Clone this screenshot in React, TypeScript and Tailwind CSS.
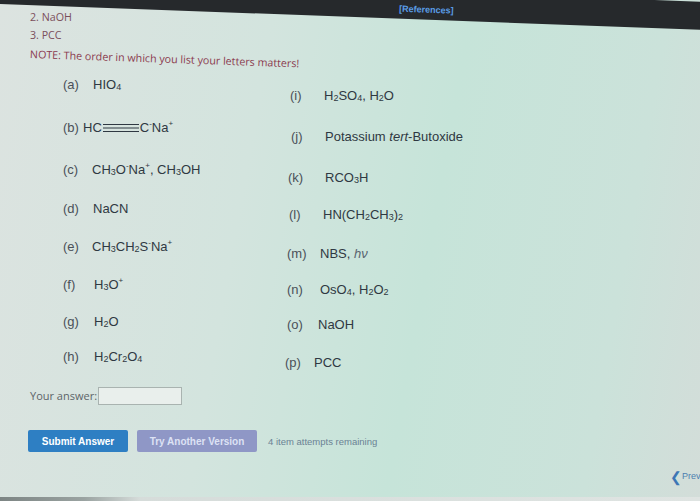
import React from "react";

const sans = { fontFamily: '"Liberation Sans", Arial, sans-serif' };

function TripleBond() {
  return (
    <svg width="36" height="10" viewBox="0 0 36 10" className="mx-[1px]">
      <line x1="0" y1="1.5" x2="36" y2="1.5" stroke="#2f3842" strokeWidth="1.2" />
      <line x1="0" y1="5" x2="36" y2="5" stroke="#2f3842" strokeWidth="1.2" />
      <line x1="0" y1="8.5" x2="36" y2="8.5" stroke="#2f3842" strokeWidth="1.2" />
    </svg>
  );
}

function Row({
  label,
  cls,
  labelCls,
  children,
}: {
  label: string;
  cls: string;
  labelCls: string;
  children: React.ReactNode;
}) {
  return (
    <div className={`flex h-[20px] items-center text-[13px] text-[#2f3842] ${cls}`}>
      <span className={`text-[#4a5058] ${labelCls}`}>{label}</span>
      <span className="flex items-center whitespace-nowrap">{children}</span>
    </div>
  );
}

const S = ({ children }: { children: React.ReactNode }) => (
  <sub className="text-[9px]">{children}</sub>
);
const P = ({ children }: { children: React.ReactNode }) => (
  <sup className="text-[8px]">{children}</sup>
);

export default function App() {
  return (
    <div
      className="relative flex h-[501px] w-[700px] flex-col overflow-hidden bg-[linear-gradient(100deg,#dce3e0_0%,#d3e4de_35%,#c6e4d9_60%,#cbe2da_85%,#d3ddd9_100%)]"
      style={sans}
    >
      {/* top frame bar */}
      <div className="h-0">
        <div className="mt-[-24px] flex h-[28px] w-[740px] origin-top-left rotate-[2.1deg] items-end bg-[#26292c] pb-[3px]">
          <span className="ml-[400px] text-[9px] font-bold text-[#5a9de6]">[References]</span>
        </div>
      </div>

      {/* header */}
      <div
        className="mt-[8px] pl-[30px] text-[10.7px] leading-[18px] text-[#7b4f5c]"
        style={{ fontFamily: '"Open Sans", sans-serif' }}
      >
        <div>2. NaOH</div>
        <div>3. PCC</div>
        <div className="mt-[1px] origin-left rotate-[2deg] text-[#8a3a4e]">
          NOTE: The order in which you list your letters matters!
        </div>
      </div>

      {/* reagent columns */}
      <div className="mt-[12px] flex">
        <div className="flex w-[285px] flex-col pl-[63px]">
          <Row label="(a)" cls="" labelCls="w-[30px]">
            HIO<S>4</S>
          </Row>
          <Row label="(b)" cls="mt-[23px]" labelCls="w-[20px]">
            HC
            <TripleBond />
            C<P>-</P>Na<P>+</P>
          </Row>
          <Row label="(c)" cls="mt-[22px]" labelCls="w-[29px]">
            CH<S>3</S>O<P>-</P>Na<P>+</P>, CH<S>3</S>OH
          </Row>
          <Row label="(d)" cls="mt-[19px]" labelCls="w-[30px]">
            NaCN
          </Row>
          <Row label="(e)" cls="mt-[18px]" labelCls="w-[29px]">
            CH<S>3</S>CH<S>2</S>S<P>-</P>Na<P>+</P>
          </Row>
          <Row label="(f)" cls="mt-[18px]" labelCls="w-[31px]">
            H<S>3</S>O<P>+</P>
          </Row>
          <Row label="(g)" cls="mt-[17px]" labelCls="w-[31px]">
            H<S>2</S>O
          </Row>
          <Row label="(h)" cls="mt-[15px]" labelCls="w-[31px]">
            H<S>2</S>Cr<S>2</S>O<S>4</S>
          </Row>
        </div>
        <div className="flex flex-col pt-[11px]">
          <Row label="(i)" cls="ml-[5px]" labelCls="w-[34px]">
            H<S>2</S>SO<S>4</S>, H<S>2</S>O
          </Row>
          <Row label="(j)" cls="mt-[21px] ml-[6px]" labelCls="w-[34px]">
            Potassium&nbsp;<i>tert</i>-Butoxide
          </Row>
          <Row label="(k)" cls="mt-[21px] ml-[3px]" labelCls="w-[37px]">
            RCO<S>3</S>H
          </Row>
          <Row label="(l)" cls="mt-[17px] ml-[4px]" labelCls="w-[34px]">
            HN(CH<S>2</S>CH<S>3</S>)<S>2</S>
          </Row>
          <Row label="(m)" cls="mt-[19px] ml-[2px]" labelCls="w-[33px]">
            NBS,&nbsp;<i className="text-[#5a6470]">hν</i>
          </Row>
          <Row label="(n)" cls="mt-[16px] ml-[2px]" labelCls="w-[33px]">
            OsO<S>4</S>, H<S>2</S>O<S>2</S>
          </Row>
          <Row label="(o)" cls="mt-[15px] ml-[2px]" labelCls="w-[31px]">
            NaOH
          </Row>
          <Row label="(p)" cls="mt-[18px]" labelCls="w-[29px]">
            PCC
          </Row>
        </div>
      </div>

      {/* answer */}
      <div
        className="mt-[14px] flex h-[18px] items-center pl-[30px] text-[11px] text-[#5d6469]"
        style={{ fontFamily: '"Open Sans", sans-serif' }}
      >
        <span>Your answer:</span>
        <div className="ml-[1px] h-[18px] w-[84px] border border-[#a9b3b0] bg-[#e9efec]" />
      </div>

      {/* buttons */}
      <div className="mt-[25px] flex h-[22px] items-center pl-[28px]">
        <button className="flex h-[22px] w-[100px] items-center justify-center rounded-[2px] bg-[#2e7fc3] text-[10px] font-bold text-white">
          Submit Answer
        </button>
        <button className="ml-[9px] flex h-[22px] w-[120px] items-center justify-center rounded-[2px] bg-[#8f97c6] text-[10px] font-bold text-[#dde2f4]">
          Try Another Version
        </button>
        <span className="ml-[11px] mt-[3px] text-[9.5px] text-[#6a8294]">4 item attempts remaining</span>
      </div>

      {/* prev */}
      <div className="mt-[16px] flex h-[17px] items-center justify-end">
        <div className="flex h-[17px] w-[30px] items-center rounded-l-[3px] text-[9px] text-[#4d7fb0]">
          <span className="text-[14px] leading-none text-[#3c76b5]">❮</span>
          <span>Prev</span>
        </div>
      </div>

      <div className="flex-1" />
      <div className="h-[4px] bg-[linear-gradient(90deg,#7d8584_0%,#9aa3a1_12%,#d6dcda_20%,#dfe4e2_100%)]" />
    </div>
  );
}
